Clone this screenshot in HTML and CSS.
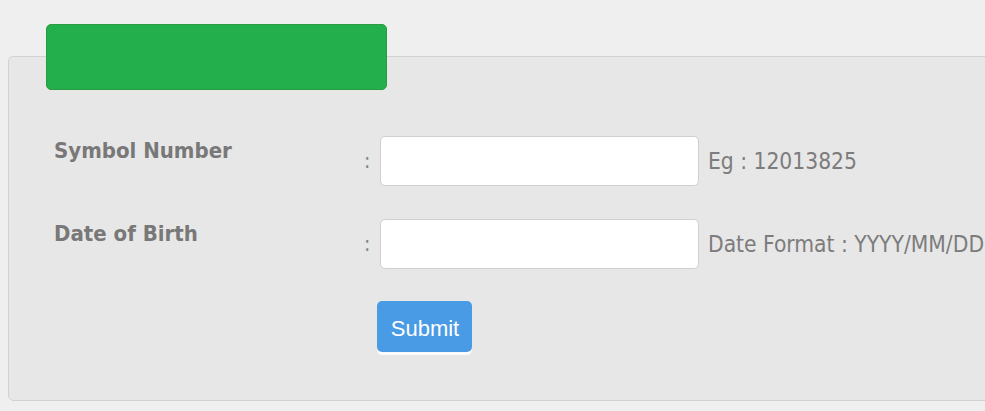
FILE: index.html
```html
<!DOCTYPE html>
<html>
<head>
<meta charset="utf-8">
<link rel="stylesheet" href="styles.css">
</head>
<body>
<div class="page">
  <div class="panel">
    <div class="tab"></div>
    <form class="form">
      <label class="label">Symbol Number</label>
      <span class="colon">:</span>
      <input class="field" type="text">
      <span class="hint">Eg : 12013825</span>

      <label class="label">Date of Birth</label>
      <span class="colon">:</span>
      <input class="field" type="text">
      <span class="hint">Date Format : YYYY/MM/DD</span>

      <span class="spacer"></span>
      <span class="spacer"></span>
      <div class="actions"><button class="submit" type="button">Submit</button></div>
    </form>
  </div>
</div>
</body>
</html>
```
FILE: styles.css
```css
html, body {
  margin: 0;
  padding: 0;
  background: #efefef;
  overflow: hidden;
}
.page {
  padding: 56px 0 0 8px;
  width: 1010px;
}
.panel {
  background: #e7e7e7;
  border: 1px solid #d2d2d2;
  border-radius: 5px;
  height: 343px;
  box-shadow: 0 1px 0 #f8f8f8;
}
.tab {
  margin: -33px 0 0 37px;
  width: 339px;
  height: 64px;
  background: #23b04c;
  border: 1px solid #2c9a3e;
  border-radius: 5px;
}
.form {
  display: grid;
  grid-template-columns: 310px 16px 319px auto;
  grid-auto-rows: auto;
  row-gap: 33px;
  column-gap: 0;
  margin: 46px 0 0 45px;
  align-items: center;
  font-family: "DejaVu Sans Condensed", "DejaVu Sans", sans-serif;
  font-stretch: condensed;
}
.label {
  align-self: start;
  padding-top: 3px;
  font-size: 22px;
  line-height: 24px;
  font-weight: bold;
  color: #787878;
}
.colon {
  font-size: 21px;
  color: #858585;
  padding-left: 0;
}
.field {
  box-sizing: border-box;
  width: 319px;
  height: 50px;
  margin: 0;
  background: #fff;
  border: 1px solid #cfcfcf;
  border-radius: 5px;
}
.hint {
  font-size: 22.6px;
  color: #7c7c7c;
  padding-left: 9px;
  white-space: nowrap;
}
.actions {
  grid-column: 3 / 5;
  margin-top: -1px;
  margin-left: -3px;
}
.submit {
  font-family: "Liberation Sans", Arial, sans-serif;
  font-size: 22px;
  color: #fff;
  background: #4a9be6;
  border: 0;
  border-radius: 5px;
  width: 95px;
  height: 51px;
  padding: 4px 0 0 1px;
  box-shadow: 0 3px 0 #fbfbfb;
}
```
